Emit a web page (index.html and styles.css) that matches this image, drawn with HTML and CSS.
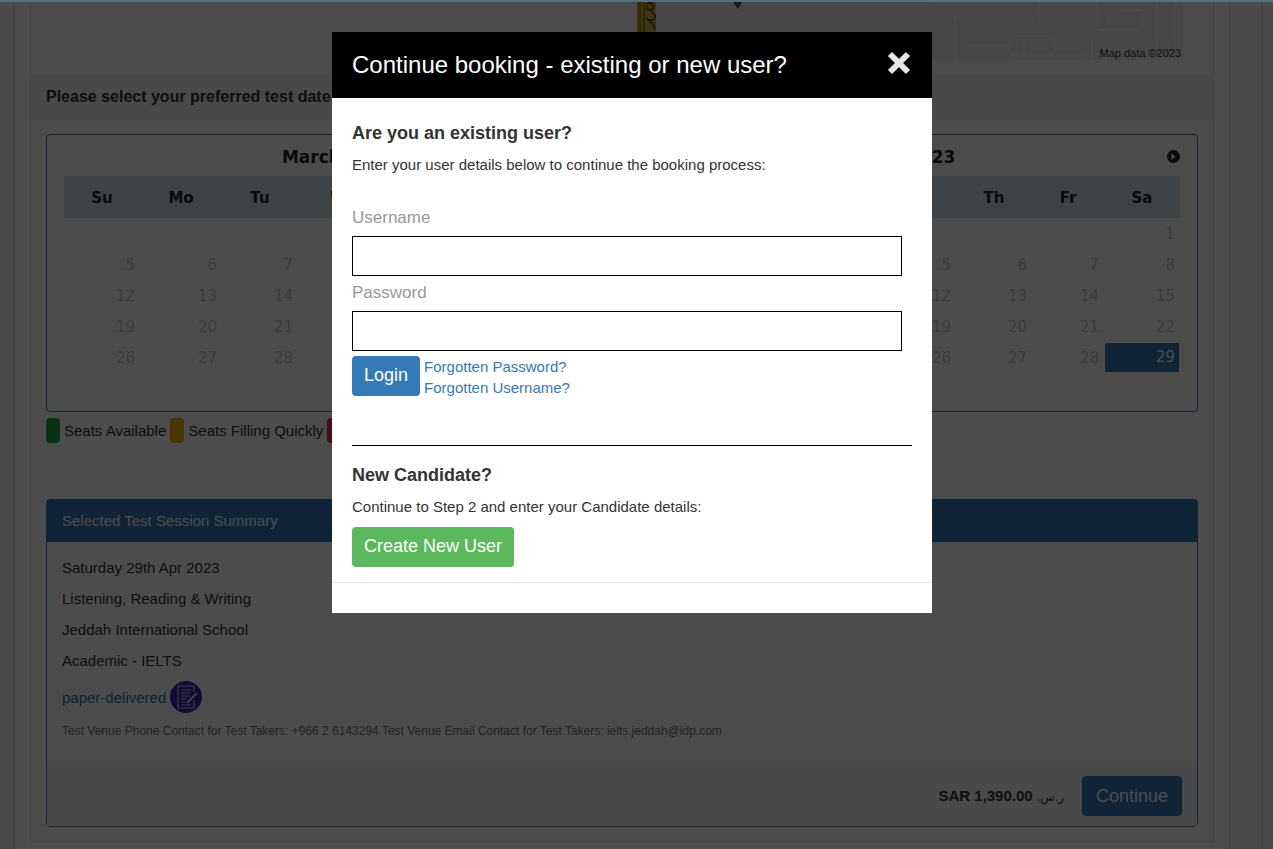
FILE: index.html
```html
<!DOCTYPE html>
<html lang="en">
<head>
<meta charset="UTF-8">
<meta name="viewport" content="width=device-width, initial-scale=1.0">
<title>IELTS Test Booking</title>
<link rel="stylesheet" href="styles.css">
</head>
<body>

<div class="page">
  <main class="content">
    <div class="panel">
      <div class="map-row">
        <svg class="map" viewBox="0 0 546 60" aria-hidden="true">
          <rect width="546" height="60" fill="#f6f6f8"/>
          <rect x="295" width="251" height="60" fill="#eeeef2"/>
          <g fill="none" stroke="#f8f8fa" stroke-width="2">
            <path d="M90 0V28H190V0M145 0V30M285 0V60M318 60V17H412M402 0V22M331 46H372M372 52V42L380 36H412L418 42V52L410 56H376ZM387 38V54M455 40V60M460 0V30H500L506 24V10H478L472 18V26M520 0V46M538 0V46M372 56H450"/>
          </g>
          <path d="M0 0H19V34H0Z" fill="#d9ae36"/>
          <path d="M3 0V34M7 0V34" stroke="#6b5310" stroke-width="1"/>
          <path d="M10 4q4-3 6 1t-3 5q-4 0-3-4M14 11l4 4q1 4-3 5t-5-2M12 21l4 3 2 5" fill="none" stroke="#3a3020" stroke-width="1.3"/>
          <path d="M96 2H105L101 9Z" fill="#3a5260"/>
        </svg>
        <span class="map-credit">Map data ©2023</span>
      </div>

      <h2 class="panel-title">Please select your preferred test date</h2>

      <div class="panel-body">
        <div class="calendar">
          <section class="month">
            <div class="month-title">March 2023</div>
            <table>
              <colgroup><col class="w-76"><col class="w-82"><col class="w-76"><col><col class="w-76"><col class="w-72"><col class="w-76"></colgroup>
              <thead>
                <tr><th>Su</th><th>Mo</th><th>Tu</th><th>We</th><th>Th</th><th>Fr</th><th>Sa</th></tr>
              </thead>
              <tbody>
                <tr><td></td><td></td><td></td><td>1</td><td>2</td><td>3</td><td>4</td></tr>
                <tr><td>5</td><td>6</td><td>7</td><td>8</td><td>9</td><td>10</td><td>11</td></tr>
                <tr><td>12</td><td>13</td><td>14</td><td>15</td><td>16</td><td>17</td><td>18</td></tr>
                <tr><td>19</td><td>20</td><td>21</td><td>22</td><td>23</td><td>24</td><td>25</td></tr>
                <tr><td>26</td><td>27</td><td>28</td><td>29</td><td>30</td><td>31</td><td></td></tr>
              </tbody>
            </table>
          </section>
          <section class="month">
            <div class="month-title">April 2023
              <button class="next" type="button" aria-label="Next month">
                <svg width="13" height="13" viewBox="0 0 12 12"><circle cx="6" cy="6" r="6" fill="#222"/><path d="M4 3L8 6L4 9Z" fill="#fff"/></svg>
              </button>
            </div>
            <table>
              <colgroup><col class="w-76"><col class="w-82"><col class="w-76"><col><col class="w-76"><col class="w-72"><col class="w-76"></colgroup>
              <thead>
                <tr><th>Su</th><th>Mo</th><th>Tu</th><th>We</th><th>Th</th><th>Fr</th><th>Sa</th></tr>
              </thead>
              <tbody>
                <tr><td></td><td></td><td></td><td></td><td></td><td></td><td>1</td></tr>
                <tr><td>2</td><td>3</td><td>4</td><td>5</td><td>6</td><td>7</td><td>8</td></tr>
                <tr><td>9</td><td>10</td><td>11</td><td>12</td><td>13</td><td>14</td><td>15</td></tr>
                <tr><td>16</td><td>17</td><td>18</td><td>19</td><td>20</td><td>21</td><td>22</td></tr>
                <tr><td>23</td><td>24</td><td>25</td><td>26</td><td>27</td><td>28</td><td class="selected"><a href="#29">29</a></td></tr>
                <tr><td>30</td><td></td><td></td><td></td><td></td><td></td><td></td></tr>
              </tbody>
            </table>
          </section>
        </div>

        <div class="legend">
          <span class="swatch green"></span><span>Seats Available</span>
          <span class="swatch yellow"></span><span>Seats Filling Quickly</span>
          <span class="swatch red"></span>
        </div>

        <section class="summary">
          <h3 class="summary-title">Selected Test Session Summary</h3>
          <div class="summary-body">
            <p>Saturday 29th Apr 2023</p>
            <p>Listening, Reading &amp; Writing</p>
            <p>Jeddah International School</p>
            <p>Academic - IELTS</p>
            <div class="delivery">
              <a href="#paper">paper-delivered</a>
              <svg width="32" height="32" viewBox="0 0 32 32" aria-hidden="true">
                <circle cx="16" cy="16" r="16" fill="#3a1fb5"/>
                <g fill="none" stroke="#d0d0e0" stroke-width="1.2">
                  <path d="M24 11V5H8V27H24V19"/>
                  <path d="M11 9H21M11 12H21M11 15H20M11 18H17M11 21H15M11 24H21"/>
                  <path d="M27 12L19 20L17 22" stroke-width="2"/>
                </g>
              </svg>
            </div>
            <small>Test Venue Phone Contact for Test Takers: +966 2 6143294 Test Venue Email Contact for Test Takers: ielts.jeddah@idp.com</small>
          </div>
          <div class="summary-footer">
            <strong>SAR 1,390.00 <span class="riyal" dir="rtl">ر.س.</span></strong>
            <button class="btn btn-primary btn-wide" type="button">Continue</button>
          </div>
        </section>
      </div>
    </div>
  </main>
  <aside class="side"></aside>
</div>

<!-- Login / new user dialog -->
<div class="modal-backdrop">
  <div class="modal" role="dialog" aria-labelledby="modal-title">
    <div class="modal-header">
      <h1 id="modal-title">Continue booking - existing or new user?</h1>
      <button class="close" type="button" aria-label="Close">
        <svg width="26" height="26" viewBox="0 0 26 26"><path d="M4 4L22 22M22 4L4 22" stroke="#e6e6e6" stroke-width="6"/></svg>
      </button>
    </div>
    <div class="modal-body">
      <h4>Are you an existing user?</h4>
      <p>Enter your user details below to continue the booking process:</p>
      <form class="login">
        <label for="username">Username</label>
        <input type="text" id="username">
        <label for="password">Password</label>
        <input type="password" id="password">
        <div class="login-actions">
          <button class="btn btn-primary" type="button">Login</button>
          <div class="forgotten">
            <a href="#password">Forgotten Password?</a>
            <a href="#username">Forgotten Username?</a>
          </div>
        </div>
      </form>
      <hr>
      <h4>New Candidate?</h4>
      <p>Continue to Step 2 and enter your Candidate details:</p>
      <button class="btn btn-success" type="button">Create New User</button>
    </div>
    <div class="modal-footer"></div>
  </div>
</div>

</body>
</html>
```
FILE: styles.css
```css
* {
  box-sizing: border-box;
}
body {
  margin: 0;
  font-family: "Liberation Sans", Arial, "DejaVu Sans", sans-serif;
  font-size: 15px;
  line-height: 21px;
  color: #333;
  background-color: #fff;
}
a {
  color: #337ab7;
  text-decoration: none;
}
p {
  margin: 0 0 10px;
}

/* Page frame */
.page {
  display: flex;
  min-height: 100vh;
  background-color: #fbfbfb;
}
.content {
  flex: 1;
  margin-left: 13px;
  padding: 0 15px 6px;
  background-color: #fff;
  border-left: 2px solid #d3e0df;
  border-right: 2px solid #e4e4e4;
}
.side {
  width: 12px;
  margin-left: 30px;
  border-left: 2px solid #e4e4e4;
}
.panel {
  border: 1px solid #e2e2e2;
  border-top: 0;
}
.map-row {
  display: flex;
  justify-content: flex-end;
  position: relative;
  padding: 0 30px 15px;
}
.map {
  width: 546px;
  height: 60px;
}
.map-credit {
  position: absolute;
  right: 32px;
  bottom: 15px;
  font-size: 11px;
  line-height: 14px;
}
.panel-title {
  margin: 0;
  padding: 11px 15px 13px;
  font-size: 16px;
  background-color: #f5f5f5;
}
.panel-body {
  padding: 14px 15px;
}

/* Calendar */
.calendar {
  display: grid;
  grid-template-columns: 1fr 1fr;
  gap: 20px;
  min-height: 278px;
  padding: 0 17px;
  border: 1px solid #337ab7;
  border-radius: 4px;
  font-family: "DejaVu Sans", Verdana, sans-serif;
}
.month-title {
  position: relative;
  height: 41px;
  line-height: 44px;
  font-size: 17px;
  font-weight: bold;
  text-align: center;
  color: #222;
}
.next {
  position: absolute;
  right: 0;
  top: 15px;
  display: flex;
  padding: 0;
  border: 0;
  background: none;
}
.month table {
  width: 100%;
  table-layout: fixed;
  border-collapse: collapse;
}
.w-72 {
  width: 72px;
}
.w-76 {
  width: 76px;
}
.w-82 {
  width: 82px;
}
.month th {
  height: 42px;
  padding: 2px 0 0;
  color: #222;
  background-color: #cfe0e6;
}
.month td {
  height: 31px;
  padding: 3px 5px 1px 1px;
  text-align: right;
  color: #cacaca;
}
.month td.selected {
  padding: 1px;
}
.selected a {
  display: block;
  padding: 4px;
  color: #fff;
  background-color: #337ab7;
}

.legend {
  display: flex;
  align-items: center;
  gap: 4px;
  margin: 6px 0 56px;
}
.swatch {
  width: 14px;
  height: 25px;
  border-radius: 4px;
}
.green {
  background-color: #1fae45;
}
.yellow {
  background-color: #f0b400;
}
.red {
  background-color: #dc3545;
}

/* Summary */
.summary {
  border: 1px solid #337ab7;
  border-radius: 4px;
}
.summary-title {
  margin: 0;
  padding: 10px 15px 11px;
  font-size: 15px;
  font-weight: normal;
  color: #fff;
  background-color: #337ab7;
}
.summary-body {
  padding: 15px 15px 24px;
}
.delivery {
  display: flex;
  align-items: center;
  gap: 4px;
  margin-bottom: 8px;
}
.summary-body small {
  display: block;
  font-size: 12px;
  color: #777;
}
.summary-footer {
  display: flex;
  justify-content: flex-end;
  align-items: center;
  gap: 18px;
  padding: 10px 15px;
  background-color: #f5f5f5;
}
.riyal {
  font-size: 12px;
  font-weight: normal;
}

/* Buttons */
.btn {
  height: 40px;
  padding: 0 12px 2px;
  border: 0;
  border-radius: 4px;
  font-family: inherit;
  font-size: 18px;
  color: #fff;
}
.btn-wide {
  padding: 0 14px;
}
.btn-primary {
  background-color: #337ab7;
}
.btn-success {
  background-color: #5cb85c;
}

/* Modal */
.modal-backdrop {
  position: fixed;
  inset: 0;
  padding: 30px 9px 0 0;
  overflow: auto;
  background-color: rgba(0, 0, 0, 0.7);
  border-top: 2px solid #56717d;
}
.modal {
  max-width: 600px;
  margin: 0 auto;
  background-color: #fff;
}
.modal-header {
  display: flex;
  justify-content: space-between;
  align-items: center;
  height: 66px;
  padding: 0 20px;
  color: #fff;
  background-color: #000;
}
.modal-header h1 {
  margin: 0;
  font-size: 24px;
  line-height: 26px;
  font-weight: normal;
}
.close {
  display: flex;
  padding: 0 0 5px;
  border: 0;
  background: none;
}
.modal-body {
  padding: 25px 20px 15px;
}
.modal-body h4 {
  margin: 0 0 11px;
  font-size: 18px;
  line-height: 20px;
}
.login {
  margin-top: 30px;
  padding-right: 10px;
}
.login label {
  display: block;
  margin: 4px 0 5px;
  font-size: 17px;
  line-height: 26px;
  color: #999;
}
.login input {
  display: block;
  width: 100%;
  height: 40px;
  padding: 6px 12px;
  border: 1px solid #000;
  font-size: 16px;
}
.login-actions {
  display: flex;
  gap: 4px;
  margin-top: 5px;
}
.forgotten a {
  display: block;
}
.modal-body hr {
  margin: 47px 0 19px;
  border: 0;
  border-top: 1px solid #000;
}
.modal-footer {
  height: 31px;
  border-top: 1px solid #e5e5e5;
}
```
